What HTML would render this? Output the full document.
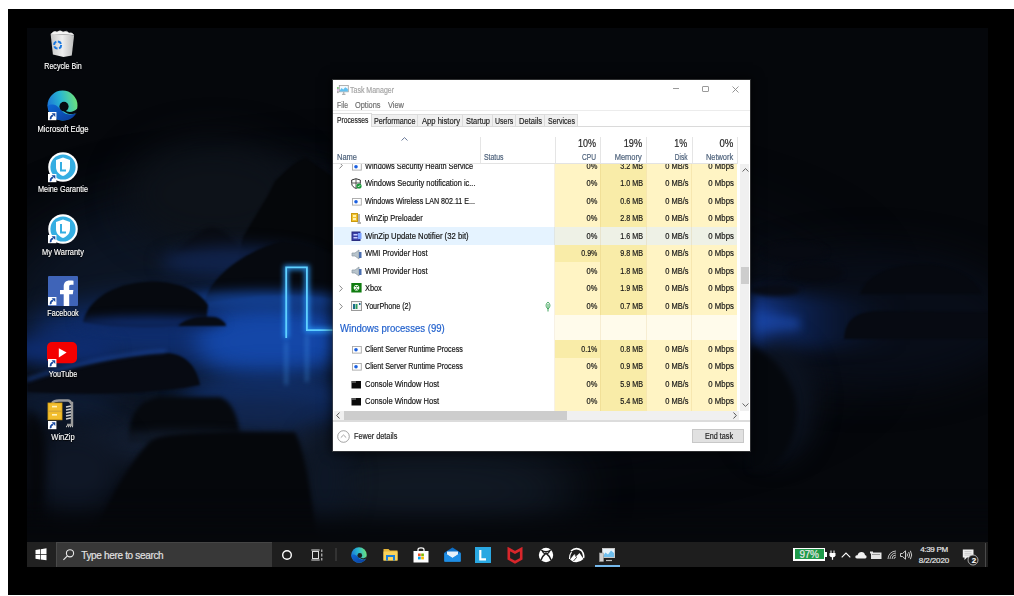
<!DOCTYPE html>
<html><head><meta charset="utf-8">
<style>
*{margin:0;padding:0;box-sizing:border-box}
html,body{width:1014px;height:596px;overflow:hidden;background:#fff;font-family:"Liberation Sans",sans-serif}
.r{position:absolute}
.tx{position:absolute;white-space:nowrap;line-height:12px;height:12px;-webkit-text-stroke:0.18px currentColor}
</style></head><body>
<div class="r" style="left:8px;top:9px;width:1006px;height:586px;background:#000"></div>
<svg class="r" style="left:27px;top:28px" width="961" height="514" viewBox="27 28 961 514">
<defs>
<filter id="f40" color-interpolation-filters="sRGB" filterUnits="userSpaceOnUse" x="-200" y="-200" width="1400" height="1000"><feGaussianBlur stdDeviation="40"/></filter><filter id="f30" color-interpolation-filters="sRGB" filterUnits="userSpaceOnUse" x="-200" y="-200" width="1400" height="1000"><feGaussianBlur stdDeviation="30"/></filter><filter id="f14" color-interpolation-filters="sRGB" filterUnits="userSpaceOnUse" x="-200" y="-200" width="1400" height="1000"><feGaussianBlur stdDeviation="14"/></filter><filter id="f25" color-interpolation-filters="sRGB" filterUnits="userSpaceOnUse" x="-200" y="-200" width="1400" height="1000"><feGaussianBlur stdDeviation="25"/></filter><filter id="f18" color-interpolation-filters="sRGB" filterUnits="userSpaceOnUse" x="-200" y="-200" width="1400" height="1000"><feGaussianBlur stdDeviation="18"/></filter><filter id="f12" color-interpolation-filters="sRGB" filterUnits="userSpaceOnUse" x="-200" y="-200" width="1400" height="1000"><feGaussianBlur stdDeviation="12"/></filter><filter id="f8" color-interpolation-filters="sRGB" filterUnits="userSpaceOnUse" x="-200" y="-200" width="1400" height="1000"><feGaussianBlur stdDeviation="8"/></filter><filter id="f6" color-interpolation-filters="sRGB" filterUnits="userSpaceOnUse" x="-200" y="-200" width="1400" height="1000"><feGaussianBlur stdDeviation="6"/></filter><filter id="f5" color-interpolation-filters="sRGB" filterUnits="userSpaceOnUse" x="-200" y="-200" width="1400" height="1000"><feGaussianBlur stdDeviation="5"/></filter><filter id="f3" color-interpolation-filters="sRGB" filterUnits="userSpaceOnUse" x="-200" y="-200" width="1400" height="1000"><feGaussianBlur stdDeviation="3"/></filter><filter id="f2" color-interpolation-filters="sRGB" filterUnits="userSpaceOnUse" x="-200" y="-200" width="1400" height="1000"><feGaussianBlur stdDeviation="2"/></filter><filter id="f1" color-interpolation-filters="sRGB" filterUnits="userSpaceOnUse" x="-200" y="-200" width="1400" height="1000"><feGaussianBlur stdDeviation="1"/></filter><filter id="glow" color-interpolation-filters="sRGB" filterUnits="userSpaceOnUse" x="-200" y="-200" width="1400" height="1000"><feGaussianBlur stdDeviation="2.5"/></filter>
</defs>
<rect x="27" y="27" width="961" height="515" fill="#05070b"/>
<!-- overall navy haze -->
<ellipse cx="420" cy="320" rx="420" ry="120" fill="#0a101c" filter="url(#f40)"/>
<ellipse cx="190" cy="320" rx="190" ry="120" fill="#0c1524" filter="url(#f30)"/>
<ellipse cx="430" cy="490" rx="150" ry="50" fill="#111924" filter="url(#f25)"/>
<ellipse cx="280" cy="215" rx="90" ry="45" fill="#0f1522" filter="url(#f18)"/>
<!-- mountains behind -->
<ellipse cx="215" cy="195" rx="90" ry="55" fill="#0d1219" filter="url(#f18)"/>
<path d="M243 237 C252 222 262 205 267 197 L275 181 C285 172 295 160 306 158 C318 165 335 180 360 195 L360 290 L230 290 Z" fill="#05070a" filter="url(#f1)"/>
<path d="M175 252 C190 238 205 228 212 227 C225 229 235 242 245 252 Z" fill="#090c13" filter="url(#f2)"/>
<ellipse cx="240" cy="262" rx="80" ry="16" fill="#10224a" filter="url(#f8)"/>
<!-- blue fog -->
<ellipse cx="200" cy="332" rx="175" ry="34" fill="#0f3076" filter="url(#f14)" opacity="0.9"/>
<ellipse cx="270" cy="342" rx="75" ry="38" fill="#1447a8" filter="url(#f12)"/>
<ellipse cx="60" cy="350" rx="55" ry="14" fill="#0e2c70" filter="url(#f8)"/>
<ellipse cx="270" cy="398" rx="85" ry="25" fill="#11306c" filter="url(#f12)"/>

<!-- gray-blue fog lower -->
<ellipse cx="200" cy="442" rx="140" ry="26" fill="#141f33" filter="url(#f12)"/>
<ellipse cx="260" cy="412" rx="80" ry="18" fill="#112650" filter="url(#f12)"/>
<ellipse cx="60" cy="405" rx="60" ry="18" fill="#0f1d36" filter="url(#f12)"/>
<ellipse cx="325" cy="480" rx="25" ry="50" fill="#0e1726" filter="url(#f12)"/>
<!-- right side -->
<linearGradient id="ray" x1="0" y1="0" x2="1" y2="0"><stop offset="0" stop-color="#173f9c"/><stop offset="0.35" stop-color="#0e2a6a" stop-opacity="0.7"/><stop offset="1" stop-color="#0a1830" stop-opacity="0"/></linearGradient>
<ellipse cx="870" cy="320" rx="150" ry="70" fill="#080d18" filter="url(#f18)"/>
<path d="M745 292 L900 300 L900 345 L745 352 Z" fill="url(#ray)" filter="url(#f8)"/>
<path d="M745 310 L800 318 L800 330 L745 336 Z" fill="#1f52c0" filter="url(#f5)" opacity="0.55"/>
<!-- hills in fog near L -->
<path d="M205 300 C210 280 240 252 282 241 C305 243 325 250 345 258 L345 300 C320 296 290 294 260 296 C240 298 225 300 205 302 Z" fill="#06090f" filter="url(#f1)"/>
<ellipse cx="265" cy="300" rx="80" ry="9" fill="#133f90" filter="url(#f6)"/>
<!-- rocks left -->
<path d="M83 322 C88 300 112 283 150 281.5 C180 281 200 292 208 305 L206 323 C170 328 110 328 83 322 Z" fill="#06090f" filter="url(#f1)"/>
<ellipse cx="150" cy="323" rx="75" ry="7" fill="#0e2966" filter="url(#f5)"/>
<path d="M178 326 C185 318 200 315 215 317 C222 319 226 323 226 326 Z" fill="#070b14" filter="url(#f1)"/>
<path d="M27 382 C60 370 120 355 166 353 C185 354 196 365 200 385 C150 395 80 395 27 392 Z" fill="#070a12" filter="url(#f1)"/>
<path d="M27 380 C60 368 120 353 166 351" fill="none" stroke="#1d48a0" stroke-width="2" filter="url(#f2)"/>
<path d="M129 441 C128 420 135 400 160 397 L220 397 C235 402 240 425 240 441 Z" fill="#06090e" filter="url(#f2)"/>
<ellipse cx="185" cy="438" rx="70" ry="7" fill="#131d2e" filter="url(#f5)"/>
<ellipse cx="75" cy="470" rx="50" ry="45" fill="#0f1726" filter="url(#f14)"/>
<path d="M89 542 C110 500 130 460 150.5 441 C160 433 200 431 295 432 C305 450 312 500 317 542 Z" fill="#05070b" filter="url(#f2)"/>
<path d="M27 410 C40 412 48 440 45 480 L40 542 L27 542 Z" fill="#05070b" filter="url(#f5)"/>
<!-- rocks right -->
<path d="M860 294 C868 272 895 264 925 264 C955 265 975 278 982 294 Z" fill="#060910" filter="url(#f1)"/>
<path d="M844 339 C845 322 853 311 880 311 L990 312 L990 339 Z" fill="#070a12" filter="url(#f1)"/>
<ellipse cx="795" cy="252" rx="32" ry="9" fill="#070a12" filter="url(#f2)"/>
<ellipse cx="815" cy="273" rx="28" ry="9" fill="#070a12" filter="url(#f2)"/>
<ellipse cx="775" cy="290" rx="25" ry="6" fill="#080c16" filter="url(#f2)"/>
<ellipse cx="775" cy="400" rx="40" ry="60" fill="#0c1320" filter="url(#f12)"/>
<path d="M750 345 C765 352 785 365 795 395 C802 425 790 460 765 470 L750 470 Z" fill="#05080d" filter="url(#f3)"/>
<!-- bottom darkness -->
<rect x="0" y="518" width="1014" height="60" fill="#05070b" filter="url(#f12)"/>
<!-- neon L -->
<path d="M286.2 338 V267.4 H306.9 V330.2 H340" fill="none" stroke="#2a9cff" stroke-width="5" filter="url(#glow)" opacity="0.8"/>
<path d="M286.2 338 V267.4 H306.9 V330.2 H340" fill="none" stroke="#5fd0ff" stroke-width="1.8"/>
<path d="M286.2 342 V385 M306.9 335 V382" fill="none" stroke="#4aa0f0" stroke-width="2.5" opacity="0.45" filter="url(#f2)"/>
</svg>
<svg class="r" style="left:49px;top:29px" width="27" height="30" viewBox="0 0 27 30">
<defs><linearGradient id="rbg" x1="0" y1="0" x2="1" y2="0"><stop offset="0" stop-color="#c8c8c8"/><stop offset="0.5" stop-color="#eeeeee"/><stop offset="1" stop-color="#bdbdbd"/></linearGradient></defs>
<path d="M1.6 4.8 L25.1 6.3 L22.8 26.6 L14.5 28 L3.9 25.4Z" fill="url(#rbg)"/>
<path d="M2 5 Q5 1 8 3 Q11 0.5 14 3 Q18 1 20 4 Q23 3 25 6" fill="#f4f4f4" stroke="#ddd" stroke-width="0.5"/>
<circle cx="8.6" cy="16" r="3.6" fill="none" stroke="#1a78e0" stroke-width="2" stroke-dasharray="4 1.6"/>
</svg>
<div class="tx" style="left:22.5px;width:80px;top:60.00px;text-align:center;color:#fff;font-size:8.6px;transform:scaleX(0.8259);transform-origin:center center;-webkit-text-stroke:0.15px #fff;text-shadow:0 0 1.5px #000,0 1px 1px #000">Recycle Bin</div>
<svg class="r" style="left:47px;top:90px" width="31" height="31" viewBox="0 0 31 31">
<defs><linearGradient id="eg" x1="0" y1="0.6" x2="1" y2="0.4"><stop offset="0" stop-color="#1a74d8"/><stop offset="0.5" stop-color="#2ab8d0"/><stop offset="1" stop-color="#6ee27a"/></linearGradient>
<linearGradient id="eg2" x1="0" y1="0" x2="1" y2="1"><stop offset="0" stop-color="#0e6ad8"/><stop offset="1" stop-color="#0a3a98"/></linearGradient></defs>
<circle cx="15.5" cy="15.5" r="15" fill="url(#eg)"/>
<path d="M0.6 14 C1 25 8 30.6 16 30.6 C22 30.6 27 27.5 29.5 23 C24 25.5 18 24.5 15.5 21.5 C12.5 18 10 15 6 14.5 C3.5 14.3 1.5 15 0.6 16Z" fill="url(#eg2)"/>
<ellipse cx="17" cy="16.6" rx="4.6" ry="4.8" fill="#070a10"/>
<path d="M17.5 20 C21 23 26.5 22.5 30.4 18.5 L30 22.5 C26 25 20.5 24.5 17 21.5Z" fill="#070a10"/>
</svg>
<svg class="r" style="left:47.7px;top:112.2px" width="9" height="9" viewBox="0 0 9 9"><rect x="0" y="0" width="8.4" height="8.2" fill="#fff"/><path d="M2.7 7.3 C2.3 5.5 3 4 5.2 3.2" fill="none" stroke="#1a4aa0" stroke-width="1.7"/><path d="M3.6 1.2 L7.3 1.2 L7.3 4.9 Z" fill="#1a4aa0"/></svg>
<div class="tx" style="left:22.5px;width:80px;top:122.50px;text-align:center;color:#fff;font-size:8.6px;transform:scaleX(0.8892);transform-origin:center center;-webkit-text-stroke:0.15px #fff;text-shadow:0 0 1.5px #000,0 1px 1px #000">Microsoft Edge</div>
<svg class="r" style="left:47.5px;top:152.20px" width="30" height="30" viewBox="0 0 30 30">
<circle cx="15" cy="15" r="14.8" fill="#fff"/><circle cx="15" cy="15" r="12.6" fill="#35aee2"/>
<path d="M15 5.5 L22 8 V15 C22 20 18.5 22.5 15 24 C11.5 22.5 8 20 8 15 V8 Z" fill="#fff"/>
<path d="M13 10 V18.5 H18" fill="none" stroke="#35aee2" stroke-width="2"/>
</svg>
<svg class="r" style="left:47.7px;top:173.9px" width="9" height="9" viewBox="0 0 9 9"><rect x="0" y="0" width="8.4" height="8.2" fill="#fff"/><path d="M2.7 7.3 C2.3 5.5 3 4 5.2 3.2" fill="none" stroke="#1a4aa0" stroke-width="1.7"/><path d="M3.6 1.2 L7.3 1.2 L7.3 4.9 Z" fill="#1a4aa0"/></svg>
<div class="tx" style="left:22.5px;width:80px;top:183.00px;text-align:center;color:#fff;font-size:8.6px;transform:scaleX(0.8504);transform-origin:center center;-webkit-text-stroke:0.15px #fff;text-shadow:0 0 1.5px #000,0 1px 1px #000">Meine Garantie</div>
<svg class="r" style="left:47.5px;top:213.50px" width="30" height="30" viewBox="0 0 30 30">
<circle cx="15" cy="15" r="14.8" fill="#fff"/><circle cx="15" cy="15" r="12.6" fill="#35aee2"/>
<path d="M15 5.5 L22 8 V15 C22 20 18.5 22.5 15 24 C11.5 22.5 8 20 8 15 V8 Z" fill="#fff"/>
<path d="M13 10 V18.5 H18" fill="none" stroke="#35aee2" stroke-width="2"/>
</svg>
<svg class="r" style="left:47.7px;top:235px" width="9" height="9" viewBox="0 0 9 9"><rect x="0" y="0" width="8.4" height="8.2" fill="#fff"/><path d="M2.7 7.3 C2.3 5.5 3 4 5.2 3.2" fill="none" stroke="#1a4aa0" stroke-width="1.7"/><path d="M3.6 1.2 L7.3 1.2 L7.3 4.9 Z" fill="#1a4aa0"/></svg>
<div class="tx" style="left:22.5px;width:80px;top:245.50px;text-align:center;color:#fff;font-size:8.6px;transform:scaleX(0.8633);transform-origin:center center;-webkit-text-stroke:0.15px #fff;text-shadow:0 0 1.5px #000,0 1px 1px #000">My Warranty</div>
<svg class="r" style="left:47.5px;top:275.5px" width="30" height="30" viewBox="0 0 30 30">
<rect x="0" y="0" width="30" height="30" rx="1" fill="#3f64b8"/>
<path d="M15.7 30 V18.3 H12 V14 H15.7 V10.5 C15.7 6.5 18 4.5 21.5 4.5 C23.5 4.5 25.5 4.7 25.5 4.7 V8.7 H23 C21.5 8.7 21.2 9.6 21.2 10.6 V14 H25.4 L24.8 18.3 H21.2 V30 Z" fill="#fff"/>
</svg>
<svg class="r" style="left:47.7px;top:297px" width="9" height="9" viewBox="0 0 9 9"><rect x="0" y="0" width="8.4" height="8.2" fill="#fff"/><path d="M2.7 7.3 C2.3 5.5 3 4 5.2 3.2" fill="none" stroke="#1a4aa0" stroke-width="1.7"/><path d="M3.6 1.2 L7.3 1.2 L7.3 4.9 Z" fill="#1a4aa0"/></svg>
<div class="tx" style="left:22.5px;width:80px;top:307.00px;text-align:center;color:#fff;font-size:8.6px;transform:scaleX(0.8314);transform-origin:center center;-webkit-text-stroke:0.15px #fff;text-shadow:0 0 1.5px #000,0 1px 1px #000">Facebook</div>
<svg class="r" style="left:47.3px;top:341.7px" width="30" height="22" viewBox="0 0 30 22">
<rect x="0" y="0" width="30" height="21.2" rx="5" fill="#f40000"/>
<path d="M11.8 6.3 L19.6 10.6 L11.8 15.5Z" fill="#fff"/>
</svg>
<svg class="r" style="left:47.7px;top:359.2px" width="9" height="9" viewBox="0 0 9 9"><rect x="0" y="0" width="8.4" height="8.2" fill="#fff"/><path d="M2.7 7.3 C2.3 5.5 3 4 5.2 3.2" fill="none" stroke="#1a4aa0" stroke-width="1.7"/><path d="M3.6 1.2 L7.3 1.2 L7.3 4.9 Z" fill="#1a4aa0"/></svg>
<div class="tx" style="left:22.5px;width:80px;top:368.00px;text-align:center;color:#fff;font-size:8.6px;transform:scaleX(0.8403);transform-origin:center center;-webkit-text-stroke:0.15px #fff;text-shadow:0 0 1.5px #000,0 1px 1px #000">YouTube</div>
<svg class="r" style="left:47px;top:399px" width="28" height="31" viewBox="0 0 28 31">
<path d="M5 4 Q7 1.5 12 1.5 H21 Q23 1.5 24 4 H25 V26 H20" fill="none" stroke="#9a9a9a" stroke-width="2.4"/>
<path d="M19 8 L24 7 M19 11 L24 10 M19 14 L24 13 M19 17 L24 16 M19 20 L24 19" stroke="#cfcfcf" stroke-width="1.4"/>
<rect x="1" y="4" width="14" height="16.8" fill="#f2be2e" stroke="#d9a010" stroke-width="0.8"/>
<rect x="1" y="11.5" width="14" height="1.6" fill="#d6a838"/>
<rect x="5" y="6.8" width="5" height="1.6" fill="#fff3c0"/><rect x="5" y="15" width="5" height="1.6" fill="#fff3c0"/>
<path d="M19 27.5 H26" stroke="#bbb" stroke-width="1.4" stroke-dasharray="1 1"/>
</svg>
<svg class="r" style="left:47.7px;top:420.9px" width="9" height="9" viewBox="0 0 9 9"><rect x="0" y="0" width="8.4" height="8.2" fill="#fff"/><path d="M2.7 7.3 C2.3 5.5 3 4 5.2 3.2" fill="none" stroke="#1a4aa0" stroke-width="1.7"/><path d="M3.6 1.2 L7.3 1.2 L7.3 4.9 Z" fill="#1a4aa0"/></svg>
<div class="tx" style="left:22.5px;width:80px;top:430.60px;text-align:center;color:#fff;font-size:8.6px;transform:scaleX(0.8745);transform-origin:center center;-webkit-text-stroke:0.15px #fff;text-shadow:0 0 1.5px #000,0 1px 1px #000">WinZip</div>
<div class="r" style="left:333px;top:80.00px;width:417.00px;height:371.00px;background:#fff;box-shadow:0 0 0 1px rgba(90,90,90,.5),0 0 10px 3px rgba(0,0,0,.55)"></div>
<div class="tx" style="left:350.3px;top:83.90px;color:#a4a4a4;font-size:8.5px;letter-spacing:0px;transform:scaleX(0.8242);transform-origin:left center;">Task Manager</div>
<svg class="r" style="left:336.5px;top:84.5px" width="12" height="10" viewBox="0 0 12 10">
<rect x="2.3" y="0.5" width="9" height="6.3" fill="#f4fafe" stroke="#a0a0a0" stroke-width="0.8"/>
<path d="M2.8 5.5 L4.5 3 L6.3 4.6 L8.2 2.3 L10.9 4 V6.4 H2.8Z" fill="#62c0f0"/>
<path d="M5 9.3 H8.5 M6.8 7 V9.3" stroke="#999" stroke-width="0.9"/>
<rect x="0.2" y="2.3" width="1.4" height="1.4" fill="#2a9a2a"/><rect x="0.2" y="4.2" width="1.4" height="1.4" fill="#c080d0"/><rect x="0.2" y="6.1" width="1.4" height="2" fill="#999"/>
</svg>
<div class="r" style="left:673.2px;top:88.40px;width:6.30px;height:1.00px;background:#9a9a9a;"></div>
<div class="r" style="left:702.2px;top:86.20px;width:6.50px;height:6.10px;background:transparent;border:1px solid #9a9a9a;border-radius:1px"></div>
<svg class="r" style="left:731.5px;top:85.5px" width="7" height="7" viewBox="0 0 7 7"><path d="M0.5 0.5 L6.5 6.5 M6.5 0.5 L0.5 6.5" stroke="#8a8a8a" stroke-width="0.9"/></svg>
<div class="tx" style="left:336.5px;top:98.50px;color:#6e6e6e;font-size:8.5px;letter-spacing:0px;transform:scaleX(0.8031);transform-origin:left center;">File</div>
<div class="tx" style="left:355.1px;top:98.50px;color:#6e6e6e;font-size:8.5px;letter-spacing:0px;transform:scaleX(0.8705);transform-origin:left center;">Options</div>
<div class="tx" style="left:388px;top:98.50px;color:#6e6e6e;font-size:8.5px;letter-spacing:0px;transform:scaleX(0.8757);transform-origin:left center;">View</div>
<div class="r" style="left:333px;top:110.00px;width:417.00px;height:1.00px;background:#ececec;"></div>
<div class="r" style="left:333px;top:113.00px;width:39.00px;height:14.00px;background:#fff;border:1px solid #dadada;border-bottom:none;border-left:none"></div>
<div class="tx" style="left:337px;top:114.20px;color:#1e1e1e;font-size:8.5px;letter-spacing:0px;transform:scaleX(0.7913);transform-origin:left center;">Processes</div>
<div class="r" style="left:372px;top:114.00px;width:46.00px;height:12.50px;background:#f0f0f0;border:1px solid #dcdcdc;border-left:none"></div>
<div class="tx" style="left:374.3px;top:114.50px;color:#1e1e1e;font-size:8.5px;letter-spacing:0px;transform:scaleX(0.8508);transform-origin:left center;">Performance</div>
<div class="r" style="left:418px;top:114.00px;width:45.00px;height:12.50px;background:#f0f0f0;border:1px solid #dcdcdc;border-left:none"></div>
<div class="tx" style="left:421.5px;top:114.50px;color:#1e1e1e;font-size:8.5px;letter-spacing:0px;transform:scaleX(0.8937);transform-origin:left center;">App history</div>
<div class="r" style="left:463px;top:114.00px;width:30.00px;height:12.50px;background:#f0f0f0;border:1px solid #dcdcdc;border-left:none"></div>
<div class="tx" style="left:466.0px;top:114.50px;color:#1e1e1e;font-size:8.5px;letter-spacing:0px;transform:scaleX(0.8757);transform-origin:left center;">Startup</div>
<div class="r" style="left:493px;top:114.00px;width:23.00px;height:12.50px;background:#f0f0f0;border:1px solid #dcdcdc;border-left:none"></div>
<div class="tx" style="left:495.4px;top:114.50px;color:#1e1e1e;font-size:8.5px;letter-spacing:0px;transform:scaleX(0.8200);transform-origin:left center;">Users</div>
<div class="r" style="left:516px;top:114.00px;width:29.00px;height:12.50px;background:#f0f0f0;border:1px solid #dcdcdc;border-left:none"></div>
<div class="tx" style="left:518.95px;top:114.50px;color:#1e1e1e;font-size:8.5px;letter-spacing:0px;transform:scaleX(0.8891);transform-origin:left center;">Details</div>
<div class="r" style="left:545px;top:114.00px;width:33.00px;height:12.50px;background:#f0f0f0;border:1px solid #dcdcdc;border-left:none"></div>
<div class="tx" style="left:548.05px;top:114.50px;color:#1e1e1e;font-size:8.5px;letter-spacing:0px;transform:scaleX(0.8253);transform-origin:left center;">Services</div>
<div class="r" style="left:372px;top:126.00px;width:378.00px;height:1.00px;background:#dadada;"></div>
<svg class="r" style="left:400.5px;top:137px" width="7" height="4" viewBox="0 0 7 4"><path d="M0.5 3.5 L3.5 0.6 L6.5 3.5" fill="none" stroke="#5a6b8c" stroke-width="0.9"/></svg>
<div class="tx" style="left:336.9px;top:150.70px;color:#4c607a;font-size:8.5px;letter-spacing:0px;transform:scaleX(0.8821);transform-origin:left center;">Name</div>
<div class="tx" style="left:483.5px;top:150.70px;color:#4c607a;font-size:8.5px;letter-spacing:0px;transform:scaleX(0.8092);transform-origin:left center;">Status</div>
<div class="r" style="left:479.5px;top:137.00px;width:1.00px;height:26.50px;background:#e5e5e5;"></div>
<div class="r" style="left:554.5px;top:137.00px;width:1.00px;height:26.50px;background:#e5e5e5;"></div>
<div class="r" style="left:600.3px;top:137.00px;width:1.00px;height:26.50px;background:#e5e5e5;"></div>
<div class="r" style="left:646px;top:137.00px;width:1.00px;height:26.50px;background:#e5e5e5;"></div>
<div class="r" style="left:691.6px;top:137.00px;width:1.00px;height:26.50px;background:#e5e5e5;"></div>
<div class="r" style="left:737px;top:137.00px;width:1.00px;height:26.50px;background:#e5e5e5;"></div>
<div class="tx" style="right:418px;top:137.20px;color:#1e1e1e;font-size:10.5px;letter-spacing:0px;text-align:right;transform:scaleX(0.8565);transform-origin:right center;">10%</div>
<div class="tx" style="right:418px;top:150.50px;color:#4c607a;font-size:8.5px;letter-spacing:0px;text-align:right;transform:scaleX(0.7801);transform-origin:right center;">CPU</div>
<div class="tx" style="right:372px;top:137.20px;color:#1e1e1e;font-size:10.5px;letter-spacing:0px;text-align:right;transform:scaleX(0.8708);transform-origin:right center;">19%</div>
<div class="tx" style="right:372px;top:150.50px;color:#4c607a;font-size:8.5px;letter-spacing:0px;text-align:right;transform:scaleX(0.8796);transform-origin:right center;">Memory</div>
<div class="tx" style="right:326.70000000000005px;top:137.20px;color:#1e1e1e;font-size:10.5px;letter-spacing:0px;text-align:right;transform:scaleX(0.8566);transform-origin:right center;">1%</div>
<div class="tx" style="right:326.70000000000005px;top:150.50px;color:#4c607a;font-size:8.5px;letter-spacing:0px;text-align:right;transform:scaleX(0.7684);transform-origin:right center;">Disk</div>
<div class="tx" style="right:280.79999999999995px;top:137.20px;color:#1e1e1e;font-size:10.5px;letter-spacing:0px;text-align:right;transform:scaleX(0.9093);transform-origin:right center;">0%</div>
<div class="tx" style="right:280.79999999999995px;top:150.50px;color:#4c607a;font-size:8.5px;letter-spacing:0px;text-align:right;transform:scaleX(0.8725);transform-origin:right center;">Network</div>
<div class="r" style="left:333px;top:163.00px;width:404.00px;height:1.00px;background:#e3e3e3;"></div>
<div class="r" style="left:333px;top:164px;width:404px;height:246.5px;overflow:hidden">
<div class="r" style="left:-333px;top:-164px;width:1014px;height:596px"><div class="r" style="left:554.5px;top:157.13px;width:45.80px;height:17.73px;background:#fff4c4;"></div><div class="r" style="left:600.3px;top:157.13px;width:45.70px;height:17.73px;background:#f9eca8;"></div><div class="r" style="left:646px;top:157.13px;width:45.60px;height:17.73px;background:#fff4c4;"></div><div class="r" style="left:691.6px;top:157.13px;width:45.40px;height:17.73px;background:#fff4c4;"></div><svg class="r" style="left:339px;top:162.40px" width="4" height="7" viewBox="0 0 4 7"><path d="M0.5 0.5 L3.3 3.5 L0.5 6.5" fill="none" stroke="#6a6a6a" stroke-width="0.8"/></svg><svg class="r" style="left:351.8px;top:162.80px" width="10" height="8" viewBox="0 0 10 8"><rect x="0.5" y="0.5" width="8.8" height="6.6" fill="#fff" stroke="#a8a8a8" stroke-width="0.9"/><circle cx="4" cy="3.8" r="1.8" fill="#1a5fe0"/></svg><div class="tx" style="left:365px;top:159.60px;color:#141414;font-size:8.5px;letter-spacing:0px;transform:scaleX(0.8627);transform-origin:left center;">Windows Security Health Service</div><div class="tx" style="right:417.0px;top:159.60px;color:#141414;font-size:8.5px;letter-spacing:0px;text-align:right;transform:scaleX(0.8791);transform-origin:right center;">0%</div><div class="tx" style="right:371.29999999999995px;top:159.60px;color:#141414;font-size:8.5px;letter-spacing:0px;text-align:right;transform:scaleX(0.8467);transform-origin:right center;">3.2 MB</div><div class="tx" style="right:325.69999999999993px;top:159.60px;color:#141414;font-size:8.5px;letter-spacing:0px;text-align:right;transform:scaleX(0.8809);transform-origin:right center;">0 MB/s</div><div class="tx" style="right:280.29999999999995px;top:159.60px;color:#141414;font-size:8.5px;letter-spacing:0px;text-align:right;transform:scaleX(0.9148);transform-origin:right center;">0 Mbps</div><div class="r" style="left:554.5px;top:174.67px;width:45.80px;height:17.73px;background:#fff4c4;"></div><div class="r" style="left:600.3px;top:174.67px;width:45.70px;height:17.73px;background:#f9eca8;"></div><div class="r" style="left:646px;top:174.67px;width:45.60px;height:17.73px;background:#fff4c4;"></div><div class="r" style="left:691.6px;top:174.67px;width:45.40px;height:17.73px;background:#fff4c4;"></div><svg class="r" style="left:351px;top:177.93px" width="11" height="11" viewBox="0 0 11 11"><path d="M5 0.7 L9.3 2 V5.5 C9.3 8 7 9.8 5 10.4 C3 9.8 0.7 8 0.7 5.5 V2Z" fill="#fff" stroke="#333" stroke-width="1"/><path d="M5 1 V10 M1 5 H9" stroke="#333" stroke-width="0.8"/><circle cx="8" cy="8" r="2.6" fill="#1a9a3a"/><path d="M6.8 8 L7.7 8.9 L9.2 7.2" stroke="#fff" stroke-width="0.8" fill="none"/></svg><div class="tx" style="left:365px;top:177.13px;color:#141414;font-size:8.5px;letter-spacing:0px;transform:scaleX(0.8761);transform-origin:left center;">Windows Security notification ic...</div><div class="tx" style="right:417.0px;top:177.13px;color:#141414;font-size:8.5px;letter-spacing:0px;text-align:right;transform:scaleX(0.8791);transform-origin:right center;">0%</div><div class="tx" style="right:371.29999999999995px;top:177.13px;color:#141414;font-size:8.5px;letter-spacing:0px;text-align:right;transform:scaleX(0.8467);transform-origin:right center;">1.0 MB</div><div class="tx" style="right:325.69999999999993px;top:177.13px;color:#141414;font-size:8.5px;letter-spacing:0px;text-align:right;transform:scaleX(0.8809);transform-origin:right center;">0 MB/s</div><div class="tx" style="right:280.29999999999995px;top:177.13px;color:#141414;font-size:8.5px;letter-spacing:0px;text-align:right;transform:scaleX(0.9148);transform-origin:right center;">0 Mbps</div><div class="r" style="left:554.5px;top:192.19px;width:45.80px;height:17.73px;background:#fff4c4;"></div><div class="r" style="left:600.3px;top:192.19px;width:45.70px;height:17.73px;background:#f9eca8;"></div><div class="r" style="left:646px;top:192.19px;width:45.60px;height:17.73px;background:#fff4c4;"></div><div class="r" style="left:691.6px;top:192.19px;width:45.40px;height:17.73px;background:#fff4c4;"></div><svg class="r" style="left:351.8px;top:197.86px" width="10" height="8" viewBox="0 0 10 8"><rect x="0.5" y="0.5" width="8.8" height="6.6" fill="#fff" stroke="#a8a8a8" stroke-width="0.9"/><circle cx="4" cy="3.8" r="1.8" fill="#1a5fe0"/></svg><div class="tx" style="left:365px;top:194.66px;color:#141414;font-size:8.5px;letter-spacing:0px;transform:scaleX(0.8386);transform-origin:left center;">Windows Wireless LAN 802.11 E...</div><div class="tx" style="right:417.0px;top:194.66px;color:#141414;font-size:8.5px;letter-spacing:0px;text-align:right;transform:scaleX(0.8791);transform-origin:right center;">0%</div><div class="tx" style="right:371.29999999999995px;top:194.66px;color:#141414;font-size:8.5px;letter-spacing:0px;text-align:right;transform:scaleX(0.8467);transform-origin:right center;">0.6 MB</div><div class="tx" style="right:325.69999999999993px;top:194.66px;color:#141414;font-size:8.5px;letter-spacing:0px;text-align:right;transform:scaleX(0.8809);transform-origin:right center;">0 MB/s</div><div class="tx" style="right:280.29999999999995px;top:194.66px;color:#141414;font-size:8.5px;letter-spacing:0px;text-align:right;transform:scaleX(0.9148);transform-origin:right center;">0 Mbps</div><div class="r" style="left:554.5px;top:209.73px;width:45.80px;height:17.73px;background:#fff4c4;"></div><div class="r" style="left:600.3px;top:209.73px;width:45.70px;height:17.73px;background:#f9eca8;"></div><div class="r" style="left:646px;top:209.73px;width:45.60px;height:17.73px;background:#fff4c4;"></div><div class="r" style="left:691.6px;top:209.73px;width:45.40px;height:17.73px;background:#fff4c4;"></div><svg class="r" style="left:351px;top:213.49px" width="11" height="11" viewBox="0 0 11 11"><rect x="0.5" y="0.5" width="6" height="8" fill="#f2c230" stroke="#c99a10"/><rect x="2" y="2" width="3" height="2" fill="#fff3b0"/><rect x="2" y="5" width="3" height="2" fill="#fff3b0"/><path d="M8 1 V9 M6.5 10 H10" stroke="#666" stroke-width="1"/></svg><div class="tx" style="left:365px;top:212.19px;color:#141414;font-size:8.5px;letter-spacing:0px;transform:scaleX(0.8787);transform-origin:left center;">WinZip Preloader</div><div class="tx" style="right:417.0px;top:212.19px;color:#141414;font-size:8.5px;letter-spacing:0px;text-align:right;transform:scaleX(0.8791);transform-origin:right center;">0%</div><div class="tx" style="right:371.29999999999995px;top:212.19px;color:#141414;font-size:8.5px;letter-spacing:0px;text-align:right;transform:scaleX(0.8467);transform-origin:right center;">2.8 MB</div><div class="tx" style="right:325.69999999999993px;top:212.19px;color:#141414;font-size:8.5px;letter-spacing:0px;text-align:right;transform:scaleX(0.8809);transform-origin:right center;">0 MB/s</div><div class="tx" style="right:280.29999999999995px;top:212.19px;color:#141414;font-size:8.5px;letter-spacing:0px;text-align:right;transform:scaleX(0.9148);transform-origin:right center;">0 Mbps</div><div class="r" style="left:334px;top:227.25px;width:220.50px;height:17.53px;background:#e5f3ff;"></div><div class="r" style="left:554.5px;top:227.25px;width:45.80px;height:17.73px;background:#eef1e6;"></div><div class="r" style="left:600.3px;top:227.25px;width:45.70px;height:17.73px;background:#eef1e6;"></div><div class="r" style="left:646px;top:227.25px;width:45.60px;height:17.73px;background:#eef1e6;"></div><div class="r" style="left:691.6px;top:227.25px;width:45.40px;height:17.73px;background:#eef1e6;"></div><svg class="r" style="left:351px;top:231.02px" width="11" height="11" viewBox="0 0 11 11"><rect x="1" y="1" width="8" height="8.5" fill="#3b3fa8" stroke="#2a2d80"/><rect x="2.5" y="3" width="4" height="1.5" fill="#c8d0ff"/><rect x="2.5" y="6" width="4" height="1.5" fill="#c8d0ff"/><rect x="7" y="2" width="3.5" height="6" fill="#7aa0ff"/></svg><div class="tx" style="left:365px;top:229.72px;color:#141414;font-size:8.5px;letter-spacing:0px;transform:scaleX(0.9062);transform-origin:left center;">WinZip Update Notifier (32 bit)</div><div class="tx" style="right:417.0px;top:229.72px;color:#141414;font-size:8.5px;letter-spacing:0px;text-align:right;transform:scaleX(0.8791);transform-origin:right center;">0%</div><div class="tx" style="right:371.29999999999995px;top:229.72px;color:#141414;font-size:8.5px;letter-spacing:0px;text-align:right;transform:scaleX(0.8467);transform-origin:right center;">1.6 MB</div><div class="tx" style="right:325.69999999999993px;top:229.72px;color:#141414;font-size:8.5px;letter-spacing:0px;text-align:right;transform:scaleX(0.8809);transform-origin:right center;">0 MB/s</div><div class="tx" style="right:280.29999999999995px;top:229.72px;color:#141414;font-size:8.5px;letter-spacing:0px;text-align:right;transform:scaleX(0.9148);transform-origin:right center;">0 Mbps</div><div class="r" style="left:554.5px;top:244.79px;width:45.80px;height:17.73px;background:#f9eca8;"></div><div class="r" style="left:600.3px;top:244.79px;width:45.70px;height:17.73px;background:#f9eca8;"></div><div class="r" style="left:646px;top:244.79px;width:45.60px;height:17.73px;background:#fff4c4;"></div><div class="r" style="left:691.6px;top:244.79px;width:45.40px;height:17.73px;background:#fff4c4;"></div><svg class="r" style="left:351px;top:248.55px" width="11" height="11" viewBox="0 0 11 11"><path d="M1 4 H4 L8 1 V10 L4 7 H1Z" fill="#b8c4cc" stroke="#8a98a2" stroke-width="0.7"/><rect x="8" y="3" width="2.5" height="6" fill="#4a6fb0"/></svg><div class="tx" style="left:365px;top:247.25px;color:#141414;font-size:8.5px;letter-spacing:0px;transform:scaleX(0.8764);transform-origin:left center;">WMI Provider Host</div><div class="tx" style="right:417.0px;top:247.25px;color:#141414;font-size:8.5px;letter-spacing:0px;text-align:right;transform:scaleX(0.8310);transform-origin:right center;">0.9%</div><div class="tx" style="right:371.29999999999995px;top:247.25px;color:#141414;font-size:8.5px;letter-spacing:0px;text-align:right;transform:scaleX(0.8467);transform-origin:right center;">9.8 MB</div><div class="tx" style="right:325.69999999999993px;top:247.25px;color:#141414;font-size:8.5px;letter-spacing:0px;text-align:right;transform:scaleX(0.8809);transform-origin:right center;">0 MB/s</div><div class="tx" style="right:280.29999999999995px;top:247.25px;color:#141414;font-size:8.5px;letter-spacing:0px;text-align:right;transform:scaleX(0.9148);transform-origin:right center;">0 Mbps</div><div class="r" style="left:554.5px;top:262.32px;width:45.80px;height:17.73px;background:#fff4c4;"></div><div class="r" style="left:600.3px;top:262.32px;width:45.70px;height:17.73px;background:#f9eca8;"></div><div class="r" style="left:646px;top:262.32px;width:45.60px;height:17.73px;background:#fff4c4;"></div><div class="r" style="left:691.6px;top:262.32px;width:45.40px;height:17.73px;background:#fff4c4;"></div><svg class="r" style="left:351px;top:266.08px" width="11" height="11" viewBox="0 0 11 11"><path d="M1 4 H4 L8 1 V10 L4 7 H1Z" fill="#b8c4cc" stroke="#8a98a2" stroke-width="0.7"/><rect x="8" y="3" width="2.5" height="6" fill="#4a6fb0"/></svg><div class="tx" style="left:365px;top:264.78px;color:#141414;font-size:8.5px;letter-spacing:0px;transform:scaleX(0.8764);transform-origin:left center;">WMI Provider Host</div><div class="tx" style="right:417.0px;top:264.78px;color:#141414;font-size:8.5px;letter-spacing:0px;text-align:right;transform:scaleX(0.8791);transform-origin:right center;">0%</div><div class="tx" style="right:371.29999999999995px;top:264.78px;color:#141414;font-size:8.5px;letter-spacing:0px;text-align:right;transform:scaleX(0.8467);transform-origin:right center;">1.8 MB</div><div class="tx" style="right:325.69999999999993px;top:264.78px;color:#141414;font-size:8.5px;letter-spacing:0px;text-align:right;transform:scaleX(0.8809);transform-origin:right center;">0 MB/s</div><div class="tx" style="right:280.29999999999995px;top:264.78px;color:#141414;font-size:8.5px;letter-spacing:0px;text-align:right;transform:scaleX(0.9148);transform-origin:right center;">0 Mbps</div><div class="r" style="left:554.5px;top:279.85px;width:45.80px;height:17.73px;background:#fff4c4;"></div><div class="r" style="left:600.3px;top:279.85px;width:45.70px;height:17.73px;background:#f9eca8;"></div><div class="r" style="left:646px;top:279.85px;width:45.60px;height:17.73px;background:#fff4c4;"></div><div class="r" style="left:691.6px;top:279.85px;width:45.40px;height:17.73px;background:#fff4c4;"></div><svg class="r" style="left:339px;top:285.11px" width="4" height="7" viewBox="0 0 4 7"><path d="M0.5 0.5 L3.3 3.5 L0.5 6.5" fill="none" stroke="#6a6a6a" stroke-width="0.8"/></svg><svg class="r" style="left:351px;top:283.31px" width="11" height="10" viewBox="0 0 11 10"><rect x="0.3" y="0" width="10.3" height="9.5" fill="#107c10"/><circle cx="5.5" cy="4.8" r="2.8" fill="#fff"/><path d="M3.5 3 Q5.5 5 7.5 3 M3.5 6.8 Q5.5 4.5 7.5 6.8" stroke="#107c10" stroke-width="0.9" fill="none"/></svg><div class="tx" style="left:365px;top:282.31px;color:#141414;font-size:8.5px;letter-spacing:0px;transform:scaleX(0.8671);transform-origin:left center;">Xbox</div><div class="tx" style="right:417.0px;top:282.31px;color:#141414;font-size:8.5px;letter-spacing:0px;text-align:right;transform:scaleX(0.8791);transform-origin:right center;">0%</div><div class="tx" style="right:371.29999999999995px;top:282.31px;color:#141414;font-size:8.5px;letter-spacing:0px;text-align:right;transform:scaleX(0.8467);transform-origin:right center;">1.9 MB</div><div class="tx" style="right:325.69999999999993px;top:282.31px;color:#141414;font-size:8.5px;letter-spacing:0px;text-align:right;transform:scaleX(0.8809);transform-origin:right center;">0 MB/s</div><div class="tx" style="right:280.29999999999995px;top:282.31px;color:#141414;font-size:8.5px;letter-spacing:0px;text-align:right;transform:scaleX(0.9148);transform-origin:right center;">0 Mbps</div><div class="r" style="left:554.5px;top:297.38px;width:45.80px;height:17.73px;background:#fff4c4;"></div><div class="r" style="left:600.3px;top:297.38px;width:45.70px;height:17.73px;background:#f9eca8;"></div><div class="r" style="left:646px;top:297.38px;width:45.60px;height:17.73px;background:#fff4c4;"></div><div class="r" style="left:691.6px;top:297.38px;width:45.40px;height:17.73px;background:#fff4c4;"></div><svg class="r" style="left:339px;top:302.64px" width="4" height="7" viewBox="0 0 4 7"><path d="M0.5 0.5 L3.3 3.5 L0.5 6.5" fill="none" stroke="#6a6a6a" stroke-width="0.8"/></svg><svg class="r" style="left:351px;top:301.14px" width="11" height="10" viewBox="0 0 11 10"><rect x="0.5" y="0.5" width="10" height="9" fill="#f4f4f4" stroke="#9a9a9a"/><rect x="2" y="3" width="2" height="5" fill="#1a6a8a"/><rect x="4.5" y="3" width="2" height="5" fill="#2a9a5a"/><rect x="8" y="2" width="1.5" height="2" fill="#1a6a8a"/></svg><div class="tx" style="left:365px;top:299.84px;color:#141414;font-size:8.5px;letter-spacing:0px;transform:scaleX(0.8440);transform-origin:left center;">YourPhone (2)</div><div class="tx" style="right:417.0px;top:299.84px;color:#141414;font-size:8.5px;letter-spacing:0px;text-align:right;transform:scaleX(0.8791);transform-origin:right center;">0%</div><div class="tx" style="right:371.29999999999995px;top:299.84px;color:#141414;font-size:8.5px;letter-spacing:0px;text-align:right;transform:scaleX(0.8467);transform-origin:right center;">0.7 MB</div><div class="tx" style="right:325.69999999999993px;top:299.84px;color:#141414;font-size:8.5px;letter-spacing:0px;text-align:right;transform:scaleX(0.8809);transform-origin:right center;">0 MB/s</div><div class="tx" style="right:280.29999999999995px;top:299.84px;color:#141414;font-size:8.5px;letter-spacing:0px;text-align:right;transform:scaleX(0.9148);transform-origin:right center;">0 Mbps</div><svg class="r" style="left:543.5px;top:300.64px" width="8" height="11" viewBox="0 0 8 11"><path d="M4 1 C6.5 3 6.5 6 4 8 C1.5 6 1.5 3 4 1Z M4 3 V10.5" fill="none" stroke="#2a9a4a" stroke-width="0.9"/></svg><div class="r" style="left:554.5px;top:314.90px;width:45.80px;height:25.33px;background:#fffbeb;"></div><div class="r" style="left:600.3px;top:314.90px;width:45.70px;height:25.33px;background:#fffbeb;"></div><div class="r" style="left:646px;top:314.90px;width:45.60px;height:25.33px;background:#fffbeb;"></div><div class="r" style="left:691.6px;top:314.90px;width:45.40px;height:25.33px;background:#fffbeb;"></div><div class="tx" style="left:339.7px;top:323.20px;color:#1f5fcc;font-size:10px;letter-spacing:0px;transform:scaleX(0.9563);transform-origin:left center;">Windows processes (99)</div><div class="r" style="left:554.5px;top:340.24px;width:45.80px;height:17.73px;background:#f9eca8;"></div><div class="r" style="left:600.3px;top:340.24px;width:45.70px;height:17.73px;background:#f9eca8;"></div><div class="r" style="left:646px;top:340.24px;width:45.60px;height:17.73px;background:#fff4c4;"></div><div class="r" style="left:691.6px;top:340.24px;width:45.40px;height:17.73px;background:#fff4c4;"></div><svg class="r" style="left:351.8px;top:345.90px" width="10" height="8" viewBox="0 0 10 8"><rect x="0.5" y="0.5" width="8.8" height="6.6" fill="#fff" stroke="#a8a8a8" stroke-width="0.9"/><circle cx="4" cy="3.8" r="1.8" fill="#1a5fe0"/></svg><div class="tx" style="left:365px;top:342.70px;color:#141414;font-size:8.5px;letter-spacing:0px;transform:scaleX(0.8416);transform-origin:left center;">Client Server Runtime Process</div><div class="tx" style="right:417.0px;top:342.70px;color:#141414;font-size:8.5px;letter-spacing:0px;text-align:right;transform:scaleX(0.8310);transform-origin:right center;">0.1%</div><div class="tx" style="right:371.29999999999995px;top:342.70px;color:#141414;font-size:8.5px;letter-spacing:0px;text-align:right;transform:scaleX(0.8467);transform-origin:right center;">0.8 MB</div><div class="tx" style="right:325.69999999999993px;top:342.70px;color:#141414;font-size:8.5px;letter-spacing:0px;text-align:right;transform:scaleX(0.8809);transform-origin:right center;">0 MB/s</div><div class="tx" style="right:280.29999999999995px;top:342.70px;color:#141414;font-size:8.5px;letter-spacing:0px;text-align:right;transform:scaleX(0.9148);transform-origin:right center;">0 Mbps</div><div class="r" style="left:554.5px;top:357.76px;width:45.80px;height:17.73px;background:#fff4c4;"></div><div class="r" style="left:600.3px;top:357.76px;width:45.70px;height:17.73px;background:#f9eca8;"></div><div class="r" style="left:646px;top:357.76px;width:45.60px;height:17.73px;background:#fff4c4;"></div><div class="r" style="left:691.6px;top:357.76px;width:45.40px;height:17.73px;background:#fff4c4;"></div><svg class="r" style="left:351.8px;top:363.43px" width="10" height="8" viewBox="0 0 10 8"><rect x="0.5" y="0.5" width="8.8" height="6.6" fill="#fff" stroke="#a8a8a8" stroke-width="0.9"/><circle cx="4" cy="3.8" r="1.8" fill="#1a5fe0"/></svg><div class="tx" style="left:365px;top:360.23px;color:#141414;font-size:8.5px;letter-spacing:0px;transform:scaleX(0.8416);transform-origin:left center;">Client Server Runtime Process</div><div class="tx" style="right:417.0px;top:360.23px;color:#141414;font-size:8.5px;letter-spacing:0px;text-align:right;transform:scaleX(0.8791);transform-origin:right center;">0%</div><div class="tx" style="right:371.29999999999995px;top:360.23px;color:#141414;font-size:8.5px;letter-spacing:0px;text-align:right;transform:scaleX(0.8467);transform-origin:right center;">0.9 MB</div><div class="tx" style="right:325.69999999999993px;top:360.23px;color:#141414;font-size:8.5px;letter-spacing:0px;text-align:right;transform:scaleX(0.8809);transform-origin:right center;">0 MB/s</div><div class="tx" style="right:280.29999999999995px;top:360.23px;color:#141414;font-size:8.5px;letter-spacing:0px;text-align:right;transform:scaleX(0.9148);transform-origin:right center;">0 Mbps</div><div class="r" style="left:554.5px;top:375.30px;width:45.80px;height:17.73px;background:#fff4c4;"></div><div class="r" style="left:600.3px;top:375.30px;width:45.70px;height:17.73px;background:#f9eca8;"></div><div class="r" style="left:646px;top:375.30px;width:45.60px;height:17.73px;background:#fff4c4;"></div><div class="r" style="left:691.6px;top:375.30px;width:45.40px;height:17.73px;background:#fff4c4;"></div><svg class="r" style="left:351px;top:380.56px" width="11" height="8" viewBox="0 0 11 8"><rect x="0.5" y="0" width="9.5" height="7.5" fill="#0a0a0a"/><rect x="1" y="0.5" width="4" height="1" fill="#9a9a9a"/></svg><div class="tx" style="left:365px;top:377.76px;color:#141414;font-size:8.5px;letter-spacing:0px;transform:scaleX(0.8850);transform-origin:left center;">Console Window Host</div><div class="tx" style="right:417.0px;top:377.76px;color:#141414;font-size:8.5px;letter-spacing:0px;text-align:right;transform:scaleX(0.8791);transform-origin:right center;">0%</div><div class="tx" style="right:371.29999999999995px;top:377.76px;color:#141414;font-size:8.5px;letter-spacing:0px;text-align:right;transform:scaleX(0.8467);transform-origin:right center;">5.9 MB</div><div class="tx" style="right:325.69999999999993px;top:377.76px;color:#141414;font-size:8.5px;letter-spacing:0px;text-align:right;transform:scaleX(0.8809);transform-origin:right center;">0 MB/s</div><div class="tx" style="right:280.29999999999995px;top:377.76px;color:#141414;font-size:8.5px;letter-spacing:0px;text-align:right;transform:scaleX(0.9148);transform-origin:right center;">0 Mbps</div><div class="r" style="left:554.5px;top:392.83px;width:45.80px;height:17.73px;background:#fff4c4;"></div><div class="r" style="left:600.3px;top:392.83px;width:45.70px;height:17.73px;background:#f9eca8;"></div><div class="r" style="left:646px;top:392.83px;width:45.60px;height:17.73px;background:#fff4c4;"></div><div class="r" style="left:691.6px;top:392.83px;width:45.40px;height:17.73px;background:#fff4c4;"></div><svg class="r" style="left:351px;top:398.09px" width="11" height="8" viewBox="0 0 11 8"><rect x="0.5" y="0" width="9.5" height="7.5" fill="#0a0a0a"/><rect x="1" y="0.5" width="4" height="1" fill="#9a9a9a"/></svg><div class="tx" style="left:365px;top:395.29px;color:#141414;font-size:8.5px;letter-spacing:0px;transform:scaleX(0.8850);transform-origin:left center;">Console Window Host</div><div class="tx" style="right:417.0px;top:395.29px;color:#141414;font-size:8.5px;letter-spacing:0px;text-align:right;transform:scaleX(0.8791);transform-origin:right center;">0%</div><div class="tx" style="right:371.29999999999995px;top:395.29px;color:#141414;font-size:8.5px;letter-spacing:0px;text-align:right;transform:scaleX(0.8467);transform-origin:right center;">5.4 MB</div><div class="tx" style="right:325.69999999999993px;top:395.29px;color:#141414;font-size:8.5px;letter-spacing:0px;text-align:right;transform:scaleX(0.8809);transform-origin:right center;">0 MB/s</div><div class="tx" style="right:280.29999999999995px;top:395.29px;color:#141414;font-size:8.5px;letter-spacing:0px;text-align:right;transform:scaleX(0.9148);transform-origin:right center;">0 Mbps</div><div class="r" style="left:554.0px;top:164.00px;width:1.00px;height:247.00px;background:rgba(190,150,50,0.13);"></div><div class="r" style="left:599.8px;top:164.00px;width:1.00px;height:247.00px;background:rgba(190,150,50,0.13);"></div><div class="r" style="left:645.5px;top:164.00px;width:1.00px;height:247.00px;background:rgba(190,150,50,0.13);"></div><div class="r" style="left:691.1px;top:164.00px;width:1.00px;height:247.00px;background:rgba(190,150,50,0.13);"></div><div class="r" style="left:736.5px;top:164.00px;width:1.00px;height:247.00px;background:rgba(190,150,50,0.13);"></div></div>
</div>
<div class="r" style="left:739.5px;top:164.00px;width:9.50px;height:246.50px;background:#f0f0f0;"></div>
<div class="r" style="left:740.5px;top:267.30px;width:8.00px;height:16.40px;background:#cdcdcd;"></div>
<svg class="r" style="left:741.5px;top:168px" width="7" height="4" viewBox="0 0 7 4"><path d="M0.5 3.5 L3.5 0.6 L6.5 3.5" fill="none" stroke="#555" stroke-width="0.9"/></svg>
<svg class="r" style="left:741.5px;top:402.5px" width="7" height="4" viewBox="0 0 7 4"><path d="M0.5 0.5 L3.5 3.4 L6.5 0.5" fill="none" stroke="#555" stroke-width="0.9"/></svg>
<div class="r" style="left:334px;top:410.80px;width:405.00px;height:8.90px;background:#f0f0f0;"></div>
<div class="r" style="left:344px;top:410.80px;width:222.50px;height:8.90px;background:#cdcdcd;"></div>
<svg class="r" style="left:336px;top:412px" width="4" height="7" viewBox="0 0 4 7"><path d="M3.5 0.5 L0.7 3.5 L3.5 6.5" fill="none" stroke="#444" stroke-width="0.9"/></svg>
<svg class="r" style="left:732.5px;top:412px" width="4" height="7" viewBox="0 0 4 7"><path d="M0.5 0.5 L3.3 3.5 L0.5 6.5" fill="none" stroke="#444" stroke-width="0.9"/></svg>
<div class="r" style="left:333px;top:420.00px;width:417.00px;height:1.50px;background:#dcdcdc;"></div>
<svg class="r" style="left:337px;top:430px" width="13" height="13" viewBox="0 0 13 13"><circle cx="6.5" cy="6.5" r="5.8" fill="none" stroke="#8a8a8a" stroke-width="0.8"/><path d="M3.8 7.6 L6.5 5 L9.2 7.6" fill="none" stroke="#8a8a8a" stroke-width="0.8"/></svg>
<div class="tx" style="left:354px;top:430.10px;color:#222;font-size:8.5px;letter-spacing:0px;transform:scaleX(0.8566);transform-origin:left center;">Fewer details</div>
<div class="r" style="left:692.3px;top:429.20px;width:52.10px;height:13.40px;background:#e1e1e1;border:1px solid #c8c8c8"></div>
<div class="tx" style="left:704.5px;top:429.60px;color:#1e1e1e;font-size:8.5px;letter-spacing:0px;transform:scaleX(0.8466);transform-origin:left center;">End task</div>
<div class="r" style="left:27px;top:542.00px;width:961.00px;height:25.00px;background:#1e1e1e;"></div>
<div class="r" style="left:27px;top:542.00px;width:29.00px;height:25.00px;background:#212121;"></div>
<svg class="r" style="left:35px;top:548px" width="12" height="13" viewBox="0 0 12 13">
<path d="M0.5 2 L5 1.3 V6 H0.5Z M5.7 1.2 L11.5 0.3 V6 H5.7Z M0.5 6.7 H5 V11.4 L0.5 10.8Z M5.7 6.7 H11.5 V12.3 L5.7 11.5Z" fill="#fff"/>
</svg>
<div class="r" style="left:56px;top:542.30px;width:216.00px;height:24.40px;background:#383838;border-top:1px solid #454545;border-left:1px solid #4a4a4a"></div>
<svg class="r" style="left:62px;top:547.5px" width="13" height="13" viewBox="0 0 13 13">
<circle cx="8" cy="5.3" r="3.6" fill="none" stroke="#e8e8e8" stroke-width="1.1"/><path d="M5.4 7.9 L1.4 11.9" stroke="#e8e8e8" stroke-width="1.2"/>
</svg>
<div class="tx" style="left:81.2px;top:549.5px;color:#e2e2e2;font-size:10px;letter-spacing:-0.33px">Type here to search</div>
<svg class="r" style="left:281px;top:549px" width="12" height="12" viewBox="0 0 12 12"><circle cx="6" cy="6" r="4.3" fill="none" stroke="#fff" stroke-width="1.4"/></svg>
<svg class="r" style="left:311px;top:548.5px" width="12" height="12" viewBox="0 0 12 12">
<rect x="1.5" y="2.5" width="6" height="7" fill="none" stroke="#ddd" stroke-width="1"/>
<path d="M0.3 1 H8.7 M0.3 11 H8.7" stroke="#ddd" stroke-width="1"/>
<path d="M10.8 0.5 V3 M10.8 4.5 V7.5 M10.8 9 V11.5" stroke="#ddd" stroke-width="1"/>
</svg>
<div class="r" style="left:335px;top:548.00px;width:2.00px;height:13.00px;background:#333;"></div>
<svg class="r" style="left:350.5px;top:547px" width="16" height="16" viewBox="0 0 31 31">
<defs><linearGradient id="teg" x1="0" y1="0.6" x2="1" y2="0.4"><stop offset="0" stop-color="#1a74d8"/><stop offset="0.5" stop-color="#2ab8d0"/><stop offset="1" stop-color="#6ee27a"/></linearGradient>
<linearGradient id="teg2" x1="0" y1="0" x2="1" y2="1"><stop offset="0" stop-color="#0e6ad8"/><stop offset="1" stop-color="#0a3a98"/></linearGradient></defs>
<circle cx="15.5" cy="15.5" r="15" fill="url(#teg)"/>
<path d="M0.6 14 C1 25 8 30.6 16 30.6 C22 30.6 27 27.5 29.5 23 C24 25.5 18 24.5 15.5 21.5 C12.5 18 10 15 6 14.5 C3.5 14.3 1.5 15 0.6 16Z" fill="url(#teg2)"/>
<ellipse cx="17" cy="16.6" rx="4.6" ry="4.8" fill="#1e1e1e"/>
<path d="M17.5 20 C21 23 26.5 22.5 30.4 18.5 L30 22.5 C26 25 20.5 24.5 17 21.5Z" fill="#1e1e1e"/>
</svg>
<svg class="r" style="left:382.5px;top:548px" width="15" height="14" viewBox="0 0 15 14">
<path d="M0.5 1 H5.5 L7 2.5 H14.5 V12.5 H0.5Z" fill="#e8b73a"/>
<rect x="0.5" y="3.5" width="14" height="9" fill="#f8d35c"/>
<rect x="3" y="7" width="9" height="2" fill="#1a7fd8"/><rect x="3" y="7" width="2" height="5.5" fill="#1a7fd8"/><rect x="10" y="7" width="2" height="5.5" fill="#1a7fd8"/>
</svg>
<svg class="r" style="left:413px;top:546.5px" width="16" height="16" viewBox="0 0 16 16">
<path d="M5 4 V2.5 Q5 0.8 8 0.8 Q11 0.8 11 2.5 V4" fill="none" stroke="#fff" stroke-width="1.2"/>
<rect x="0.5" y="4" width="15" height="11.5" fill="#fff"/>
<rect x="5" y="6.5" width="2.7" height="2.7" fill="#f25022"/><rect x="8.2" y="6.5" width="2.7" height="2.7" fill="#7fba00"/>
<rect x="5" y="9.7" width="2.7" height="2.7" fill="#00a4ef"/><rect x="8.2" y="9.7" width="2.7" height="2.7" fill="#ffb900"/>
</svg>
<svg class="r" style="left:444px;top:547px" width="17" height="15" viewBox="0 0 17 15">
<path d="M0.5 5.5 L8.5 0.5 L16.5 5.5 V14.5 H0.5Z" fill="#0f6fc6"/>
<path d="M0.5 6 L8.5 11 L16.5 6 V14.5 H0.5Z" fill="#28a0f0"/>
<path d="M3 4.5 H14 V7.5 L8.5 11 L3 7.5Z" fill="#fff" opacity="0.9"/>
<path d="M0.5 6 L8.5 11 L16.5 6 V14.5 H0.5Z" fill="#1e8ee6"/>
</svg>
<svg class="r" style="left:475px;top:547px" width="16" height="16" viewBox="0 0 16 16">
<rect x="0" y="0" width="16" height="16" fill="#2aa8e2"/>
<path d="M5.3 3 V12.3 H11" fill="none" stroke="#fff" stroke-width="2.2"/>
<path d="M3 15.5 L15.5 3" stroke="#1a3a6a" stroke-width="0"/>
</svg>
<svg class="r" style="left:506.5px;top:546.5px" width="16" height="17" viewBox="0 0 16 17">
<path d="M1.8 2 L8 5.5 L14.2 2 V11.8 L8 15.2 L1.8 11.8 Z" fill="none" stroke="#d8262b" stroke-width="2.6" stroke-linejoin="miter"/>
</svg>
<svg class="r" style="left:537.5px;top:546.5px" width="16" height="16" viewBox="0 0 16 16">
<circle cx="8" cy="8" r="7.2" fill="#fff"/>
<path d="M3.2 3 Q8 6.5 12.8 3 M8 6.2 Q4 9.5 3 13 M8 6.2 Q12 9.5 13 13" stroke="#1e1e1e" stroke-width="1.5" fill="none"/>
<path d="M4.2 4 Q5.5 6.5 7.2 7.2 M11.8 4 Q10.5 6.5 8.8 7.2" stroke="#1e1e1e" stroke-width="1.3" fill="none"/>
</svg>
<svg class="r" style="left:568px;top:546.5px" width="17" height="16" viewBox="0 0 17 16">
<path d="M3 4 Q8 -0.5 13.5 3.5 Q16.5 7 15.5 11" fill="none" stroke="#fff" stroke-width="1.6"/>
<path d="M1.5 12 Q1.2 8 3.5 5" fill="none" stroke="#fff" stroke-width="1.2"/>
<path d="M2 12.5 L6.5 7 L8.5 9 L11.5 6 L15.5 12 Q12 15.3 8.5 15.3 Q4.5 15.3 2 12.5Z" fill="#fff"/>
<path d="M6.8 7.5 L8.5 10.5 L5.5 14" stroke="#1e1e1e" stroke-width="0.8" fill="none"/>
</svg>
<svg class="r" style="left:599px;top:548px" width="16" height="14" viewBox="0 0 16 14">
<rect x="3.5" y="0.5" width="12" height="9" fill="#e9f4fb" stroke="#c8c8c8"/>
<path d="M4 8 L6.5 4.5 L9 6.5 L12 2.5 L15 5 V9 H4Z" fill="#6fbfee"/>
<rect x="0.5" y="5" width="4" height="8.5" fill="#d0d0d0" stroke="#999" stroke-width="0.6"/>
<path d="M7 12.5 H13" stroke="#bbb" stroke-width="1.2"/>
</svg>
<div class="r" style="left:595.2px;top:565.00px;width:25.30px;height:2.00px;background:#76b9ed;"></div>
<div class="r" style="left:793.3px;top:548.00px;width:31.70px;height:12.80px;background:#fff;"></div>
<div class="r" style="left:794.6px;top:549.30px;width:29.10px;height:10.20px;background:#1f9a4a;"></div>
<div class="r" style="left:825px;top:552.00px;width:1.50px;height:5.00px;background:#fff;"></div>
<div class="tx" style="left:794.6px;width:29px;top:548.5px;text-align:center;color:#e8e8e8;font-size:10px;letter-spacing:-0.2px">97%</div>
<svg class="r" style="left:829px;top:550px" width="7" height="10" viewBox="0 0 7 10">
<path d="M2 0.5 V3 M5 0.5 V3" stroke="#fff" stroke-width="1"/><path d="M0.5 3 H6.5 V5.5 Q6.5 7 3.5 7.5 Q0.5 7 0.5 5.5Z" fill="#fff"/><path d="M3.5 7 V9.8" stroke="#fff" stroke-width="1.2"/>
</svg>
<svg class="r" style="left:841px;top:551.5px" width="10" height="6" viewBox="0 0 10 6"><path d="M0.7 5.3 L5 1 L9.3 5.3" fill="none" stroke="#fff" stroke-width="1.1"/></svg>
<svg class="r" style="left:855px;top:550.5px" width="12" height="8" viewBox="0 0 12 8"><path d="M2 7.5 Q0 7.5 0.3 5.5 Q0.8 4 2.5 4.2 Q3.5 1 6.5 1 Q9.5 1.2 10 4 Q11.8 4.5 11.6 6 Q11.4 7.5 9.8 7.5Z" fill="#f0f0f0"/></svg>
<svg class="r" style="left:870px;top:550.5px" width="12" height="9" viewBox="0 0 12 9"><rect x="1" y="1.5" width="10.5" height="6.5" fill="#e6e6e6"/><rect x="0" y="0.5" width="3" height="2" fill="#e6e6e6"/><rect x="2" y="3" width="8" height="1" fill="#999"/></svg>
<svg class="r" style="left:886.5px;top:549.5px" width="10" height="10" viewBox="0 0 10 10"><path d="M1 9 A8 8 0 0 1 9 1 M3 9 A6 6 0 0 1 9 3 M5 9 A4 4 0 0 1 9 5 M7 9 A2 2 0 0 1 9 7" fill="none" stroke="#cfcfcf" stroke-width="0.9"/></svg>
<svg class="r" style="left:899.5px;top:549.5px" width="13" height="10" viewBox="0 0 13 10"><path d="M0.5 3.5 H2.5 L5.5 0.8 V9.2 L2.5 6.5 H0.5Z" fill="none" stroke="#e0e0e0" stroke-width="0.9"/><path d="M7 3.5 Q8 5 7 6.5 M8.7 2 Q10.5 5 8.7 8 M10.4 0.8 Q13 5 10.4 9.2" fill="none" stroke="#e0e0e0" stroke-width="0.9"/></svg>
<div class="tx" style="left:914px;width:40px;top:543.8px;text-align:center;color:#e8e8e8;font-size:8px;letter-spacing:-0.3px">4:39 PM</div>
<div class="tx" style="left:914px;width:40px;top:555.2px;text-align:center;color:#e8e8e8;font-size:8px;letter-spacing:-0.1px">8/2/2020</div>
<svg class="r" style="left:962px;top:549px" width="17" height="17" viewBox="0 0 17 17">
<path d="M0.8 0.6 H11.5 V8.5 H5 L2.5 11 V8.5 H0.8Z" fill="#f0f0f0"/>
<path d="M2.5 2.5 H9.5 M2.5 4.3 H9.5 M2.5 6.1 H9.5" stroke="#bbb" stroke-width="0.7"/>
<circle cx="11" cy="11" r="5" fill="#1e1e1e" stroke="#bbb" stroke-width="0.9"/>
</svg>
<div class="tx" style="left:968px;width:12px;top:555px;text-align:center;color:#fff;font-size:8px;font-weight:bold">2</div>
<div class="r" style="left:985px;top:542.50px;width:1.00px;height:24.00px;background:#4a4a4a;"></div>
</body></html>
